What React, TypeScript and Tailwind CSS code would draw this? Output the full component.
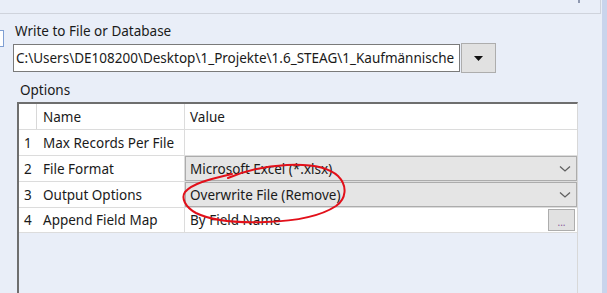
import React from "react";

const font = { fontFamily: '"Noto Sans", "Segoe UI", sans-serif' };

function Chevron() {
  return (
    <svg width="12" height="8" viewBox="0 0 12 8" className="mr-[5px]">
      <path d="M1 1.5 L6 6 L11 1.5" fill="none" stroke="#606060" strokeWidth="1.3" />
    </svg>
  );
}

function Row({ n, name, children, h }: { n: string; name: string; children: React.ReactNode; h?: string }) {
  return (
    <div className={(h ?? "h-[26px]") + " flex border-b border-[#dcdcdc] bg-white"}>
      <div className="w-[18px] flex items-center pl-[5px]">{n}</div>
      <div className="w-[148px] flex items-center pl-[6px] border-r border-[#dcdcdc]">{name}</div>
      <div className="flex-1 flex items-stretch">{children}</div>
    </div>
  );
}

export default function App() {
  return (
    <div
      className="w-[607px] h-[293px] overflow-hidden bg-[#e9eef8] flex text-[13.5px] text-[#1a1a1a] leading-[18px]"
      style={font}
    >
      <div className="w-[602px] flex flex-col">
        <div className="h-[14px] w-[601px] border-b border-r border-[#cfd3dc] flex justify-end">
          <div className="w-[2px] h-[3px] bg-[#8f98b0] mr-[20px]" />
        </div>
        <div className="flex">
          <div className="w-[4px] h-[17px] mt-[16px] bg-white border border-l-0 border-[#7f9fd3]" />
          <div className="flex flex-col">
            <div className="ml-[11px] mt-[8px] h-[18px]">Write to File or Database</div>
            <div className="flex ml-[9px] mt-[3px] items-center">
              <div className="w-[447px] h-[28px] bg-white border border-[#7a7a7a] flex items-center pl-[2px] whitespace-nowrap overflow-hidden">
                C:\Users\DE108200\Desktop\1_Projekte\1.6_STEAG\1_Kaufmännische
              </div>
              <div className="ml-[1px] w-[35px] h-[30px] bg-[#e1e1e1] border border-[#adadad] flex items-center justify-center">
                <svg width="9" height="5" viewBox="0 0 9 5">
                  <path d="M0 0 L9 0 L4.5 5 Z" fill="#111" />
                </svg>
              </div>
            </div>
          </div>
        </div>
        <div className="ml-[20px] mt-[8px] h-[18px]">Options</div>
        <div className="relative ml-[17px] mt-[3px] w-[561px] flex-1 border-l-2 border-t-2 border-[#6e6e6e] border-r border-r-[#d8d8d8]">
          <div className="flex h-[26px] bg-white border-b border-[#dcdcdc]">
            <div className="w-[18px] border-r border-[#d8d8d8]" />
            <div className="w-[148px] flex items-center pl-[6px] border-r border-[#dcdcdc]">Name</div>
            <div className="flex-1 flex items-center pl-[5px]">Value</div>
          </div>
          <Row n="1" name="Max Records Per File">
            <div />
          </Row>
          <Row n="2" name="File Format">
            <div className="flex-1 flex items-center justify-between bg-[#e5e5e5] border border-[#acacac] pl-[4px]">
              <span>Microsoft Excel (*.xlsx)</span>
              <Chevron />
            </div>
          </Row>
          <Row n="3" name="Output Options">
            <div className="flex-1 flex items-center justify-between bg-[#e5e5e5] border border-[#acacac] pl-[4px]">
              <span>Overwrite File (Remove)</span>
              <Chevron />
            </div>
          </Row>
          <Row n="4" name="Append Field Map" h="h-[25px]">
            <div className="flex-1 flex items-center justify-between pl-[5px]">
              <span>By Field Name</span>
              <div className="w-[27px] h-[22px] mr-[2px] bg-[#e1e1e1] border border-[#adadad] flex items-end justify-center pb-[3px] text-[#8a5a9a] text-[10px] leading-[10px]">
                ...
              </div>
            </div>
          </Row>
          <svg
            className="absolute left-[-19px] top-[-104px] pointer-events-none"
            width="607"
            height="293"
            viewBox="0 0 607 293"
          >
            <path
              d="M228 178 C245 171 262 166 287 165 C308 164 327 166 338 176 C348 186 346 199 336 206 C321 216 297 221 266 222 C240 223 212 221 196 213 C185 207 181 198 185 192 C192 184 206 180 232 174"
              fill="none"
              stroke="#e2101a"
              strokeWidth="2"
              strokeLinecap="round"
            />
          </svg>
        </div>
      </div>
      <div className="flex-1 bg-[#c9d4ec]" />
    </div>
  );
}
